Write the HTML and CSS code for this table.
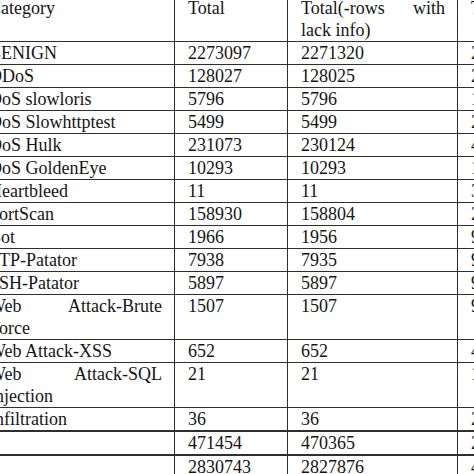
FILE: index.html
```html
<!DOCTYPE html>
<html>
<head>
<meta charset="utf-8">
<link rel="stylesheet" href="styles.css">
</head>
<body>
<div class="viewport">
<table class="data">
  <colgroup>
    <col class="c1"><col class="c2"><col class="c3"><col class="c4">
  </colgroup>
  <tr class="head">
    <td>Category</td><td>Total</td><td>Total(-rows with lack info)</td><td>Type</td>
  </tr>
  <tr><td>BENIGN</td><td>2273097</td><td>2271320</td><td>2</td></tr>
  <tr><td>DDoS</td><td>128027</td><td>128025</td><td>2</td></tr>
  <tr><td>DoS slowloris</td><td>5796</td><td>5796</td><td>1</td></tr>
  <tr><td>DoS Slowhttptest</td><td>5499</td><td>5499</td><td>2</td></tr>
  <tr><td>DoS Hulk</td><td>231073</td><td>230124</td><td>4</td></tr>
  <tr><td>DoS GoldenEye</td><td>10293</td><td>10293</td><td>1</td></tr>
  <tr><td>Heartbleed</td><td>11</td><td>11</td><td>3</td></tr>
  <tr><td>PortScan</td><td>158930</td><td>158804</td><td>2</td></tr>
  <tr><td>Bot</td><td>1966</td><td>1956</td><td>9</td></tr>
  <tr><td>FTP-Patator</td><td>7938</td><td>7935</td><td>9</td></tr>
  <tr><td>SSH-Patator</td><td>5897</td><td>5897</td><td>9</td></tr>
  <tr><td>Web Attack-Brute Force</td><td>1507</td><td>1507</td><td>9</td></tr>
  <tr><td>Web Attack-XSS</td><td>652</td><td>652</td><td>4</td></tr>
  <tr><td>Web Attack-SQL Injection</td><td>21</td><td>21</td><td>1</td></tr>
  <tr><td>Infiltration</td><td>36</td><td>36</td><td>2</td></tr>
  <tr class="thick"><td></td><td>471454</td><td>470365</td><td>2</td></tr>
  <tr class="thick"><td></td><td>2830743</td><td>2827876</td><td>4</td></tr>
</table>
</div>
</body>
</html>
```
FILE: styles.css
```css
html, body {
  margin: 0;
  padding: 0;
  background: #ffffff;
}
.viewport {
  width: 474px;
  height: 474px;
  overflow: hidden;
  position: relative;
}
.data {
  border-collapse: collapse;
  table-layout: fixed;
  width: 623px;
  margin-left: -25px;
  margin-top: -4px;
  font-family: "Liberation Serif", "Times New Roman", serif;
  font-size: 18px;
  line-height: 22px;
  color: #151515;
}
.c1 { width: 199px; }
.c2 { width: 113px; }
.c3 { width: 170px; }
.c4 { width: 141px; }
.data td {
  border: 1px solid #2e2e2e;
  padding: 0 12px 0 13px;
  vertical-align: top;
  text-align: justify;
  white-space: normal;
}
.data tr.thick td {
  border-top: 2px solid #2e2e2e;
}
```
